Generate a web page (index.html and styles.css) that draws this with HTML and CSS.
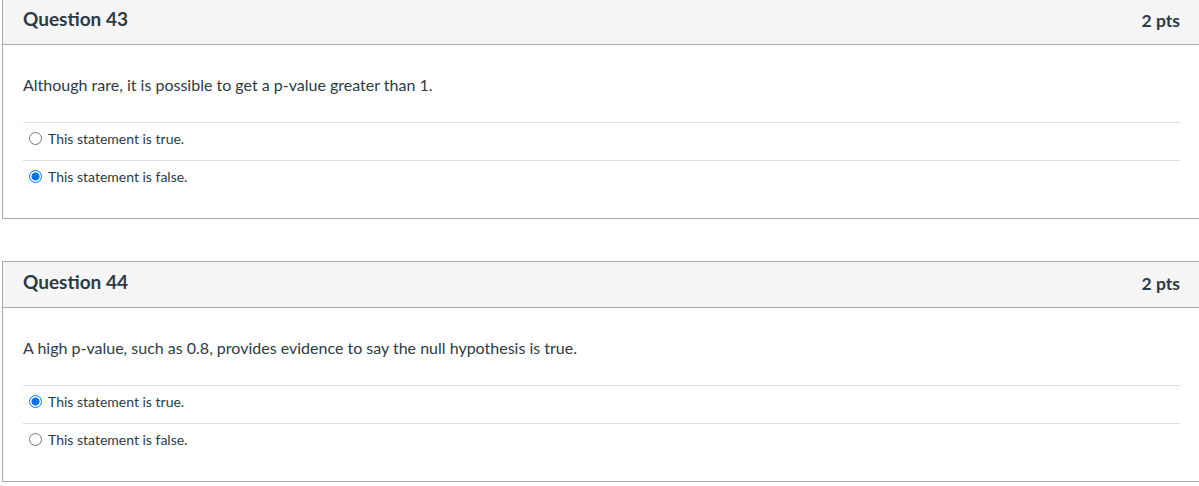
FILE: index.html
```html
<!DOCTYPE html>
<html>
<head>
<meta charset="utf-8">
<link rel="stylesheet" href="styles.css">
</head>
<body>
<div class="page">
  <section class="question first">
    <header class="q-header">
      <h2 class="q-title">Question 43</h2>
      <span class="q-points">2 pts</span>
    </header>
    <div class="q-body">
      <p class="q-text">Although rare, it is possible to get a p-value greater than 1.</p>
      <ul class="answers">
        <li class="answer"><span class="radio"></span><span class="label">This statement is true.</span></li>
        <li class="answer"><span class="radio checked"></span><span class="label">This statement is false.</span></li>
      </ul>
    </div>
  </section>
  <section class="question">
    <header class="q-header">
      <h2 class="q-title">Question 44</h2>
      <span class="q-points">2 pts</span>
    </header>
    <div class="q-body">
      <p class="q-text">A high p-value, such as 0.8, provides evidence to say the null hypothesis is true.</p>
      <ul class="answers">
        <li class="answer"><span class="radio checked"></span><span class="label">This statement is true.</span></li>
        <li class="answer"><span class="radio"></span><span class="label">This statement is false.</span></li>
      </ul>
    </div>
  </section>
</div>
</body>
</html>
```
FILE: styles.css
```css
html, body {
  margin: 0;
  padding: 0;
  background: #ffffff;
  overflow: hidden;
}
body {
  font-family: Lato, "Open Sans", "Liberation Sans", sans-serif;
  color: #2d3b45;
}
.page {
  display: flex;
  flex-direction: column;
  gap: 42px;
  margin-top: -2px;
  margin-left: 2px;
  width: 1198px;
}
.question {
  border: 1px solid #aaaaaa;
  background: #ffffff;
}
.q-header {
  display: flex;
  align-items: center;
  justify-content: space-between;
  padding: 0 19px 5px 20px;
  box-sizing: border-box;
  height: 46px;
  background: #f5f5f5;
  border-bottom: 1px solid #aaaaaa;
}
.q-title {
  margin: 0;
  font-size: 19px;
  font-weight: 700;
  color: #2d3b45;
  line-height: 24px;
}
.q-points {
  font-size: 17.5px;
  font-weight: 700;
  color: #2d3b45;
  line-height: 24px;
  padding-top: 4px;
}
.q-body {
  padding: 28px 19px 20px 20px;
}
.q-text {
  margin: 0 0 25px 0;
  font-size: 16px;
  line-height: 24px;
}
.answers {
  list-style: none;
  margin: 0;
  padding: 0;
}
.answer {
  display: flex;
  align-items: center;
  height: 38px;
  padding-bottom: 6px;
  border-top: 1px solid #dddddd;
  font-size: 14px;
  box-sizing: border-box;
}
.radio {
  width: 13px;
  height: 13px;
  margin-left: 6px;
  margin-right: 6px;
  border: 1px solid #767676;
  border-radius: 50%;
  box-sizing: border-box;
  background: #ffffff;
  flex: none;
}
.radio.checked {
  border: 1.5px solid #0075ff;
  background: radial-gradient(circle, #0075ff 0 3.8px, #ffffff 4.3px);
}
.label {
  line-height: 18px;
}
```
